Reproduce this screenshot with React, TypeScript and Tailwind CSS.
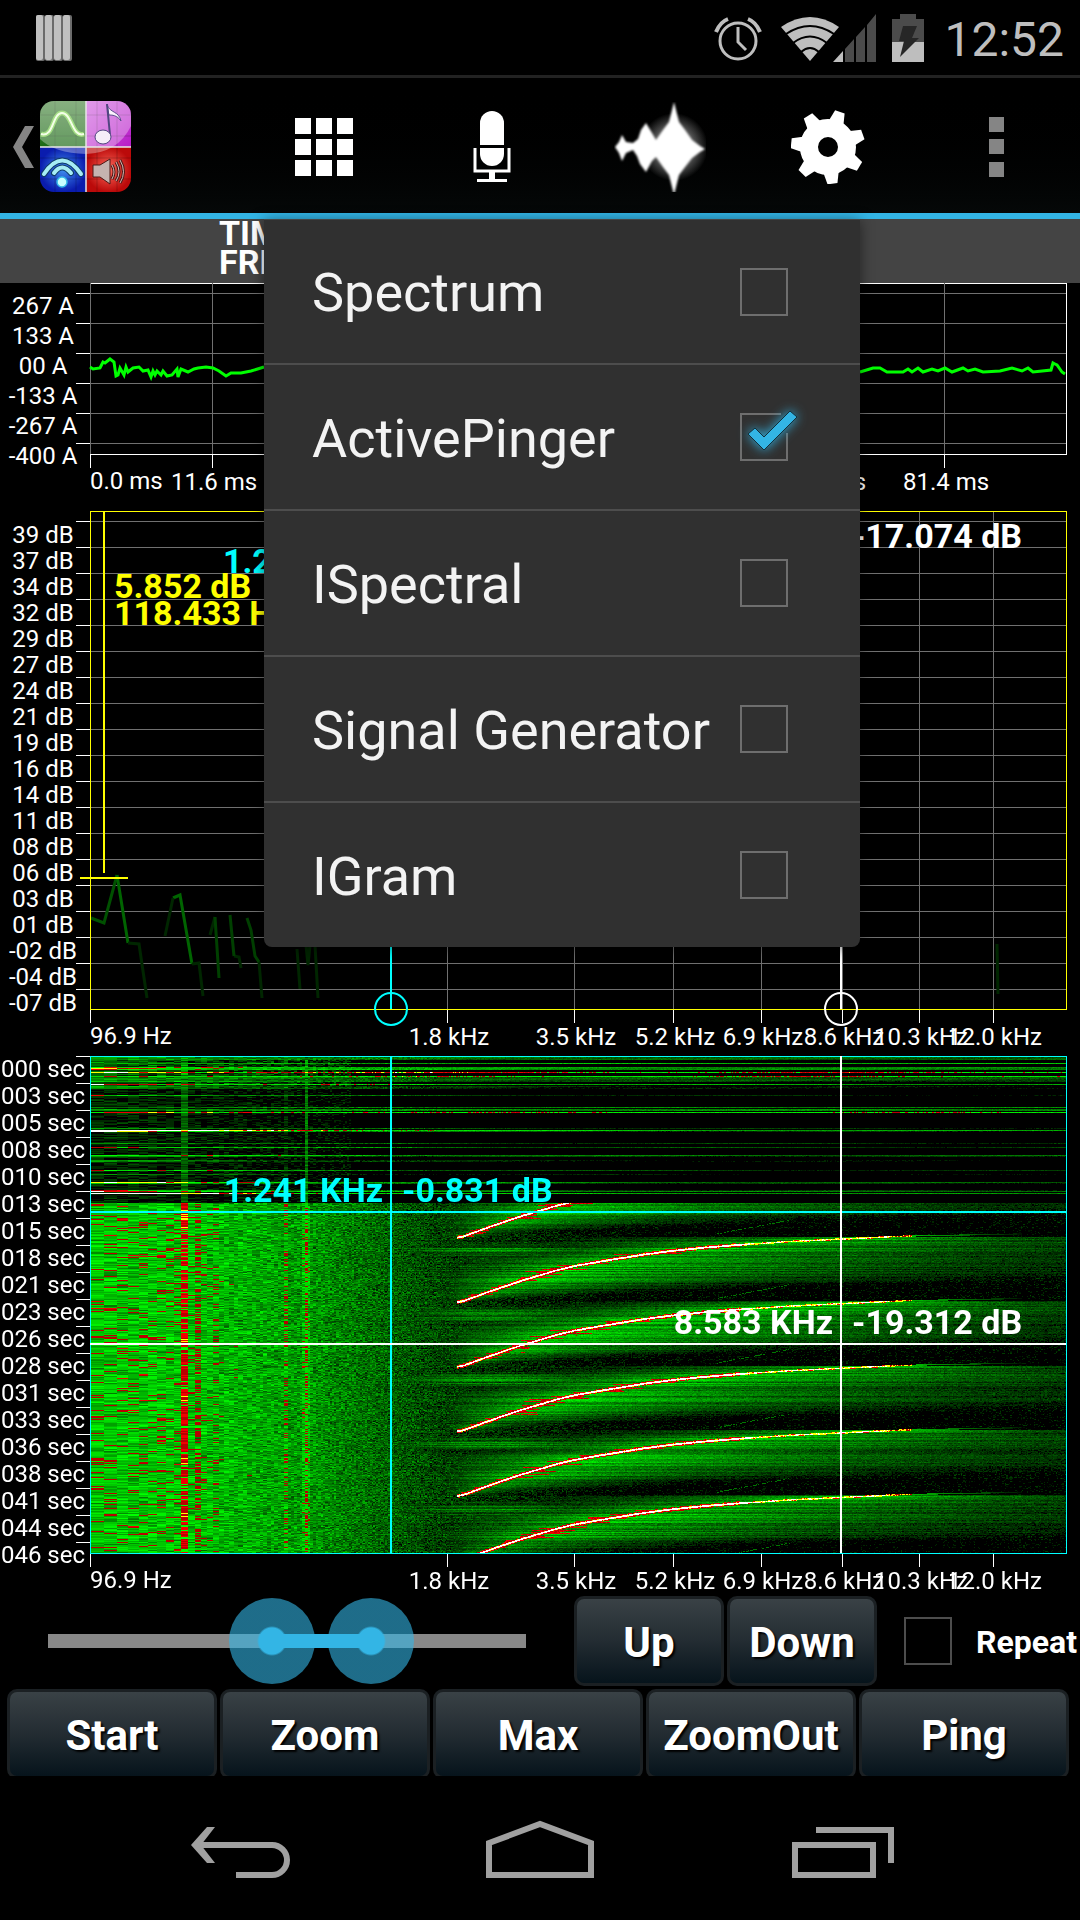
import { useEffect, useRef, useState } from "react";
import type { ReactNode } from "react";

const PLOT_LEFT = 90;
const PLOT_RIGHT = 1067;
const PLOT_WIDTH = PLOT_RIGHT - PLOT_LEFT;

const DB_LABELS = [
  "39", "37", "34", "32", "29", "27", "24", "21", "19", "16",
  "14", "11", "08", "06", "03", "01", "-02", "-04", "-07",
];

const SEC_LABELS = [
  "000", "003", "005", "008", "010", "013", "015", "018", "021", "023",
  "026", "028", "031", "033", "036", "038", "041", "044", "046",
];

const AMP_LABELS = ["267 A", "133 A", "00 A", "-133 A", "-267 A", "-400 A"];

const FREQ_TICKS = [
  { x: 447, label: "1.8 kHz" },
  { x: 574, label: "3.5 kHz" },
  { x: 673, label: "5.2 kHz" },
  { x: 761, label: "6.9 kHz" },
  { x: 842, label: "8.6 kHz" },
  { x: 919, label: "10.3 kHz" },
  { x: 993, label: "12.0 kHz" },
];

const MENU_ITEMS = ["Spectrum", "ActivePinger", "ISpectral", "Signal Generator", "IGram"];

/* ---------- status bar ---------- */

function StatusBar() {
  return (
    <div className="flex h-[75px] items-center justify-between bg-black pl-9 pr-4">
      <svg width="36" height="46" viewBox="0 0 36 46">
        {[0, 9, 18, 27].map((x) => (
          <g key={x}>
            <rect x={x} y="0" width="9" height="46" rx="2" fill="#6b6b6b" />
            <rect x={x} y="0" width="7" height="45" rx="2" fill="#c0c0c0" />
          </g>
        ))}
      </svg>
      <div className="flex items-center">
        <svg width="48" height="48" viewBox="0 0 48 48" fill="none" stroke="#bebebe">
          <circle cx="24" cy="27" r="18" strokeWidth="3" />
          <path d="M24 13v15l8 8" strokeWidth="3" />
          <path d="M2 18Q6 8 14 5M46 18Q42 8 34 5" strokeWidth="4" />
        </svg>
        <svg className="ml-[19px]" width="95" height="48" viewBox="0 0 95 48">
          <g fill="#bebebe">
            <path d="M0 13Q29 -7 58 13L29 47Z" />
          </g>
          <g fill="none" stroke="#000" strokeWidth="2">
            <path d="M5 20Q29 4 53 20" />
            <path d="M12 29Q29 16 46 29" />
            <path d="M20 38Q29 30 38 38" />
          </g>
          <g fill="#4b4b4b">
            <path d="M64 35l9-10v23h-9zM75 23l9-10v35h-9zM86 11l9-11v48h-9z" />
          </g>
          <path d="M52 48l10-11v11z" fill="#bebebe" />
        </svg>
        <svg className="ml-4" width="32" height="48" viewBox="0 0 32 48">
          <path d="M8 0h16v5h8v43H0V5h8z" fill="#4b4b4b" />
          <path d="M0 28h32v20H0z" fill="#bebebe" />
          <path d="M11 12h14l-5 12h7L8 43l4-16H7z" fill="#262626" />
        </svg>
        <span className="ml-5 pt-1 text-[48px] leading-[56px] text-[#bebebe]">12:52</span>
      </div>
    </div>
  );
}

/* ---------- action bar ---------- */

function AppLogo() {
  return (
    <svg width="91" height="91" viewBox="0 0 91 91">
      <defs>
        <clipPath id="logo-clip">
          <rect width="91" height="91" rx="14" />
        </clipPath>
        <linearGradient id="lg-green" x1="0" y1="0" x2="0" y2="1">
          <stop offset="0" stopColor="#4f8a45" />
          <stop offset="1" stopColor="#1b6a14" />
        </linearGradient>
        <linearGradient id="lg-pink" x1="0" y1="0" x2="1" y2="1">
          <stop offset="0" stopColor="#d26be0" />
          <stop offset="1" stopColor="#b81cc8" />
        </linearGradient>
        <radialGradient id="lg-blue">
          <stop offset="0" stopColor="#3f8ff0" />
          <stop offset="1" stopColor="#0a1cae" />
        </radialGradient>
        <radialGradient id="lg-red">
          <stop offset="0" stopColor="#ff6a5c" />
          <stop offset="1" stopColor="#bb0a0a" />
        </radialGradient>
      </defs>
      <g clipPath="url(#logo-clip)">
        <rect width="46" height="46" fill="url(#lg-green)" />
        <rect x="46" width="45" height="46" fill="url(#lg-pink)" />
        <rect y="46" width="46" height="45" fill="url(#lg-blue)" />
        <rect x="46" y="46" width="45" height="45" fill="url(#lg-red)" />
        <g stroke="#00000030" fill="none">
          <path d="M15 0v91M36 0v91M57 0v91M77 0v91M0 14h91M0 35h91M0 57h91M0 78h91" />
        </g>
        <path d="M0 0h91v25Q78 52 46 53Q14 52 0 38z" fill="#fff" opacity=".32" />
        <path d="M46 0v91M0 46h91" stroke="#e6e6e6" strokeWidth="1.5" />
        <path d="M1 33C14 37 12 12 22 12S32 37 44 33" fill="none" stroke="#b8f58f" strokeWidth="5" opacity=".7" />
        <path d="M1 33C14 37 12 12 22 12S32 37 44 33" fill="none" stroke="#f4ffe8" strokeWidth="2" />
        <path d="M67 4c3 8 12 6 14 16-4-6-9-6-12-6z" fill="#fff" fillOpacity=".9" stroke="#5a4d8c" strokeWidth="1" />
        <path d="M67 3l3 31" stroke="#504680" strokeWidth="2" />
        <ellipse cx="63" cy="36" rx="8" ry="7" fill="#f5eef8" stroke="#504680" strokeWidth="1" />
        <g fill="none" strokeLinecap="round">
          <path d="M4 73Q22 46 41 73M14 72Q22 61 31 72" stroke="#0d3a66" strokeWidth="6" />
          <path d="M4 73Q22 46 41 73M14 72Q22 61 31 72" stroke="#a5ecf4" strokeWidth="4" />
        </g>
        <circle cx="22" cy="81" r="5" fill="#c8ffff" stroke="#35b9e8" strokeWidth="1.5" />
        <path d="M53 64h7l10-6v25l-10-7h-7z" fill="#c5b3b0" stroke="#4a1a18" strokeWidth="1" />
        <path d="M72 64q4 7 0 14M76 61q6 10 0 19M80 59q7 12 0 23" fill="none" stroke="#4a1a18" strokeWidth="3" />
        <path d="M72 64q4 7 0 14M76 61q6 10 0 19M80 59q7 12 0 23" fill="none" stroke="#d8b5b2" strokeWidth="1" />
      </g>
    </svg>
  );
}

function GearIcon() {
  const teeth = Array.from({ length: 7 }, (_, i) => (i * 360) / 7 - 7);
  return (
    <svg width="74" height="74" viewBox="-37 -37 74 74" fill="#fff">
      <circle r="19" fill="none" stroke="#fff" strokeWidth="18" />
      {teeth.map((a) => (
        <path key={a} d="M-8 24L-5 37H5L8 24z" transform={`rotate(${a})`} />
      ))}
    </svg>
  );
}

function BarButton({ label, children }: { label: string; children: ReactNode }) {
  return (
    <button type="button" aria-label={label} className="flex h-full w-42 items-center justify-center">
      {children}
    </button>
  );
}

function ActionBar() {
  return (
    <header className="flex h-[144px] items-center border-t-[3px] border-b-[6px] border-t-[#222] border-b-[#33b5e5] bg-linear-to-b from-black to-[#050808] pt-[2px]">
      <button type="button" aria-label="Navigate up" className="flex items-center gap-[6px] pl-[13px]">
        <svg width="21" height="42" viewBox="0 0 21 42">
          <path d="M12 0h9L9 21l12 21h-9L0 21z" fill="#858585" />
        </svg>
        <AppLogo />
      </button>
      <div className="ml-auto flex h-full">
        <BarButton label="Modules">
          <svg width="58" height="58" viewBox="0 0 58 58" fill="#fff">
            {[0, 21, 42].map((y) => [0, 21, 42].map((x) => <rect key={`${x}-${y}`} x={x} y={y} width="16" height="16" />))}
          </svg>
        </BarButton>
        <BarButton label="Microphone">
          <svg width="38" height="72" viewBox="0 0 38 72" fill="#fff">
            <path d="M7 12a12 12 0 0 1 24 0v22H7z" />
            <path d="M7 37h24v6a12 12 0 0 1-24 0z" />
            <path d="M2 37v23h34V37" fill="none" stroke="#fff" strokeWidth="3" />
            <path d="M16 60h6v8h-6z" />
            <path d="M4 68h30v3H4z" />
          </svg>
        </BarButton>
        <BarButton label="Signal">
          <svg width="92" height="90" viewBox="0 0 92 90">
            <defs>
              <radialGradient id="wave-glow">
                <stop offset="0" stopColor="#fff" stopOpacity=".8" />
                <stop offset="1" stopColor="#fff" stopOpacity="0" />
              </radialGradient>
              <filter id="wave-soft">
                <feGaussianBlur stdDeviation="1.3" />
              </filter>
            </defs>
            <circle cx="60" cy="45" r="34" fill="url(#wave-glow)" />
            <path
              d="M1 45l4-5 3-7 4 7 7 1 5-4 3-9 5-7 6 10 4 7 7-10 6-8 5-20 5 20 6 8 7 10 8 6 5 3-5 3-8 6-7 9-6 8-5 20-5-20-6-8-7-10-4 4-6 11-6-8-3-8-4-6-7 3-4 8-3-8z"
              fill="#fff"
              filter="url(#wave-soft)"
            />
          </svg>
        </BarButton>
        <BarButton label="Settings">
          <GearIcon />
        </BarButton>
        <BarButton label="More options">
          <svg width="15" height="60" viewBox="0 0 15 60" fill="#858585">
            <path d="M0 0h15v15H0zM0 22h15v15H0zM0 45h15v15H0z" />
          </svg>
        </BarButton>
      </div>
    </header>
  );
}

/* ---------- drop-down ---------- */

function MenuItem({ label, checked, onChange }: { label: string; checked: boolean; onChange: () => void }) {
  return (
    <label className="flex h-[146px] items-center justify-between border-b-2 border-[#4d4d4d] pl-12 pr-[72px] text-[54px] whitespace-nowrap text-[#f3f3f3] first:h-[145px] last:h-36 last:border-b-0">
      <span className="pt-[2px]">{label}</span>
      <span className="grid size-12 shrink-0">
        <input
          type="checkbox"
          checked={checked}
          onChange={onChange}
          className="size-12 appearance-none border-2 border-[#6e6e6e] checked:border-transparent [grid-area:1/1]"
        />
        {checked && (
          <svg className="pointer-events-none overflow-visible [grid-area:1/1]" width="48" height="48" viewBox="0 0 48 48">
            <path d="M41 1H1v46h46V20" fill="none" stroke="#6e6e6e" strokeWidth="2" />
            <path
              className="drop-shadow-[0_0_6px_#33b5e5]"
              d="M8 21l7-6 9 9L50-2l7 6-33 33z"
              fill="#33b5e5"
              stroke="#12303c"
              strokeWidth="1"
            />
          </svg>
        )}
      </span>
    </label>
  );
}

function ModuleMenu() {
  const [active, setActive] = useState("ActivePinger");
  return (
    <div className="absolute top-0 right-[220px] w-[596px] rounded-b-lg border-t border-[#454545] bg-[#303030] shadow-[0_2px_14px_rgba(0,0,0,0.5)]">
      {MENU_ITEMS.map((item) => (
        <MenuItem key={item} label={item} checked={item === active} onChange={() => setActive(item)} />
      ))}
    </div>
  );
}

/* ---------- charts ---------- */

const WAVE_LEFT =
  "90,84 93,86 100,85 103,79 105,80 110,76 114,79 116,93 118,92 120,85 124,92 126,84 128,89 133,85 139,84 143,88 148,87 151,94 153,88 155,92 157,88 161,92 163,88 167,93 172,92 177,86 178,94 181,86 188,89 194,86 198,85 206,84 213,85 219,88 226,93 231,90 241,90 251,88 264,84";
const WAVE_RIGHT =
  "860,89 873,85 880,85 887,89 903,89 908,86 912,89 918,85 923,89 932,86 938,88 945,85 952,89 963,85 968,88 975,86 983,89 1000,88 1012,85 1022,88 1028,85 1033,89 1051,87 1053,80 1055,81 1057,82 1062,89 1065,91";

function TimeChart() {
  const xs = [0, 1, 2, 3, 4, 5, 6, 7].map((i) => PLOT_LEFT + i * 122);
  return (
    <svg className="block w-full" viewBox="0 0 1080 217" fontSize="24" fill="#fff">
      {AMP_LABELS.map((label, i) => (
        <g key={label}>
          <path d={`M90 ${10 + i * 30}.5H1066`} stroke="#707070" />
          <path d={`M76 ${10 + i * 30}.5H90`} stroke="#fff" />
          <text x="43" y={31 + i * 30} textAnchor="middle">{label}</text>
        </g>
      ))}
      <rect x="90.5" y="0.5" width="976" height="171" fill="none" stroke="#fff" />
      {xs.map((x) => (
        <g key={x}>
          <path d={`M${x}.5 0V171`} stroke="#707070" />
          <path d={`M${x}.5 171V185`} stroke="#fff" />
        </g>
      ))}
      <polyline points={WAVE_LEFT} fill="none" stroke="#0f0" strokeWidth="3" />
      <polyline points={WAVE_RIGHT} fill="none" stroke="#0f0" strokeWidth="3" />
      <text x="90" y="206">0.0 ms</text>
      <text x="214" y="207" textAnchor="middle">11.6 ms</text>
      <text x="823" y="207" textAnchor="middle">69.8 ms</text>
      <text x="946" y="207" textAnchor="middle">81.4 ms</text>
    </svg>
  );
}

function FreqAxis({ y, gridTop }: { y: number; gridTop?: number }) {
  return (
    <g>
      <path d={`M90.5 ${y}v14`} stroke="#fff" />
      <text x="90" y={y + 35}>96.9 Hz</text>
      {FREQ_TICKS.map(({ x, label }) => (
        <g key={label}>
          {gridTop !== undefined && <path d={`M${x}.5 ${gridTop}V${y}`} stroke="#707070" />}
          <path d={`M${x}.5 ${y}v14`} stroke="#fff" />
          <text x={x + 2} y={y + 36} textAnchor="middle">{label}</text>
        </g>
      ))}
    </g>
  );
}

function SpectrumChart() {
  return (
    <svg className="block w-full" viewBox="0 0 1080 550" fontSize="24" fill="#fff">
      {DB_LABELS.map((label, i) => (
        <g key={label}>
          <path d={`M90 ${21 + i * 26}.5H1066`} stroke="#707070" />
          <path d={`M76 ${21 + i * 26}.5H90`} stroke="#fff" />
          <text x="43" y={43 + i * 26} textAnchor="middle">{label} dB</text>
        </g>
      ))}
      <FreqAxis y={509} gridTop={11} />
      <g fill="none" strokeWidth="3">
        <path d="M91 418l13 5 13-48" stroke="#005000" />
        <path d="M117 375l11 68M173 398l7-3 12 69" stroke="#006400" />
        <path d="M128 443l11 1 8 54M165 436l8-38M192 464l7-1 4 33M210 435l5-18M234 456l5 1 2 11M259 462l3 36M297 449l3 40M306 445l2 20 2-20M315 445l3 53M997 444l1 50" stroke="#002600" />
        <path d="M215 417l4 61M230 415l4 41M247 418l4 12 4 26 4 6" stroke="#004000" />
      </g>
      <rect x="90.5" y="11.5" width="976" height="498" fill="none" stroke="#ff0" />
      <path d="M104 11V373M80 378H128" stroke="#ff0" strokeWidth="2" />
      <g fill="none" stroke="#0ff" strokeWidth="2">
        <path d="M391 11V509" />
        <circle cx="391" cy="509" r="16" />
      </g>
      <g fill="none" stroke="#fff" strokeWidth="2">
        <path d="M841 11V509" />
        <circle cx="841" cy="509" r="16" />
      </g>
      <g fontSize="34" fontWeight="700">
        <text x="114" y="98" fill="#ff0">5.852 dB</text>
        <text x="114" y="125" fill="#ff0">118.433 Hz</text>
        <text x="223" y="73" fill="#0ff">1.241 KHz</text>
        <text x="1022" y="48" textAnchor="end">-17.074 dB</text>
      </g>
    </svg>
  );
}

/* ---------- spectrogram ---------- */

function makeRandom(seed: number) {
  let s = seed;
  return () => {
    s = (s + 0x6d2b79f5) | 0;
    let t = Math.imul(s ^ (s >>> 15), 1 | s);
    t = (t + Math.imul(t ^ (t >>> 7), 61 | t)) ^ t;
    return ((t ^ (t >>> 14)) >>> 0) / 4294967296;
  };
}

// x position -> rows above the start of a ping
const SWEEP = [
  [367, -1], [373, 0], [392, 7], [409, 13], [430, 20], [450, 26], [467, 31], [484, 35], [501, 38], [519, 41],
  [553, 46.5], [584, 50.5], [615, 53.5], [646, 56], [698, 59.5], [751, 62], [815, 65], [976, 68],
];
const PERIOD = 64.6;
const FIRST_PING = 180;

function lerpTable(v: number, from: 0 | 1, to: 0 | 1) {
  for (let i = 1; i < SWEEP.length; i++) {
    if (v <= SWEEP[i][from]) {
      const a = SWEEP[i - 1];
      const b = SWEEP[i];
      return a[to] + ((v - a[from]) / (b[from] - a[from])) * (b[to] - a[to]);
    }
  }
  return SWEEP[SWEEP.length - 1][to];
}

function ramp(v: number, from: number, to: number) {
  return Math.min(1, Math.max(0, (v - from) / (to - from)));
}

// row, peak level at the left edge, level at the right edge, height
const STREAKS = [
  [1, 0.45, 0.25, 3], [7, 0.4, 0.5, 1], [11, 0.76, 0.34, 3], [16, 0.84, 0.69, 1], [20, 0.62, 0.68, 1], [21, 0.4, 0.2, 4],
  [25, 0.68, 0.1, 1], [28, 0.86, 0.42, 1], [30, 0.45, 0.02, 3], [39, 0.68, 0.04, 1], [51, 0.3, 0.36, 1],
  [53, 0.4, 0.36, 2], [56, 0.7, 0.64, 1], [72, 0.5, 0.1, 1], [74, 1.15, 0.42, 1], [75, 0.9, 0.05, 1], [87, 0.45, 0.12, 1],
  [91, 0.76, 0.14, 1], [99, 0.78, 0.26, 1], [100, 0.4, 0.1, 1], [104, 0.4, 0, 2], [114, 0.78, 0.1, 1],
  [118, 0.35, 0, 1], [126, 0.95, 0.22, 1], [127, 0.6, 0.1, 1], [134, 0.7, 0.1, 1], [135, 0.88, 0.3, 1], [137, 1.15, 0.35, 1],
];

function paintSpectrogram(ctx: CanvasRenderingContext2D, w: number, h: number) {
  const rnd = makeRandom(7);
  const img = ctx.createImageData(w, h);
  const bins: number[] = [0];
  for (let n = 0; bins[bins.length - 1] < w; n++) {
    bins.push(bins[bins.length - 1] + Math.max(1.3, 14 / (1 + 0.11 * n)));
  }

  for (let y = 0; y < h; y++) {
    const quiet = y < 147;
    const rowGain = rnd();
    const fringeLeft = rnd() < 0.35 ? 26 * rnd() : 3 * rnd();
    const fringeRight = rnd() < 0.35 ? 26 * rnd() : 3 * rnd();
    const streak = STREAKS.find((s) => y >= s[0] && y < s[0] + s[3]);
    let phase = (FIRST_PING - y) % PERIOD;
    if (phase < 0) phase += PERIOD;
    const p = phase / PERIOD;
    const cx = lerpTable(phase, 1, 0);

    for (let b = 0; b < bins.length - 1; b++) {
      const x0 = Math.round(bins[b]);
      const x1 = Math.round(bins[b + 1]);
      const noise = rnd() + rnd() - 1;
      let v: number;

      if (quiet) {
        v = x0 < 260 ? 0.1 - x0 * 0.0003 + noise * 0.16 : -0.1;
        if (y < 32) v += 0.18 * Math.exp(-x0 / 300) + noise * 0.1;
        if (x0 >= 88 && x0 < 95) v += 0.2;
        if (x0 >= 192 && x0 < 198) v += 0.08;
        if (x0 >= 215 && x0 < 217) v += 0.28;
        if (streak) {
          const fade = Math.exp(-x0 / 260);
          const drift = 0.05 * Math.sin(x0 / 62 + y * 1.7);
          v = Math.max(v, streak[1] * fade + streak[2] * (1 - fade) + drift + noise * (x0 < 350 ? 0.16 : 0.08));
        }
      } else {
        v = 0.54 - 0.16 * ramp(x0, 80, 240) - 0.18 * ramp(x0, 230, 360) - 0.16 * ramp(x0, 360, 520) + noise * 0.24;
        if (x0 < 120 && rnd() < 0.045) v = 0.73;
        if (x0 >= 88 && x0 < 95) v = 0.74 + noise * 0.1;
        if (x0 >= 101 && x0 < 107 && rnd() < 0.35) v = 0.75;
        if (x0 >= 120 && x0 < 128 && rnd() < 0.12) v = 0.74;
        if (x0 >= 192 && x0 < 198) v = rnd() < 0.25 ? 0.74 : v + 0.1;
        if (x0 >= 212 && x0 < 220) v += 0.12;
        if (x0 >= 215 && x0 < 217) v = rnd() < 0.4 ? 0.74 : 0.6;

        const inRange = ramp(x0, 230, 380);
        if (inRange > 0) {
          const d = x0 - cx;
          const leftReach = 35 + p * 130;
          const rightReach = 30 + 300 * ramp(p, 0.05, 0.45) * (1 - 0.6 * ramp(p, 0.85, 1));
          const strength = 0.4 + 0.24 * ramp(p, 0.05, 0.35);
          const glow = strength * Math.exp(d < 0 ? d / leftReach : -d / rightReach);
          const lined = glow * (0.55 + rowGain * 0.5);
          v *= 1 - inRange * (0.4 - rowGain * 0.4);
          v = Math.max(v, inRange * lined + noise * 0.1);
          const warm = 0.34 * Math.exp(-Math.pow((p - 0.78) / 0.12, 2)) * (1 - ramp(x0, 420, 620));
          v = Math.max(v, inRange * warm * (0.5 + rowGain) + noise * 0.1);
          v -= 0.06 * ramp(x0, 440, 640) * (1 - ramp(p, 0.2, 0.45));
        }
      }

      for (let x = x0; x < x1 && x < w; x++) {
        let level = v;
        if (!quiet && x >= 367) {
          const rise = lerpTable(x, 0, 1);
          let dy = (((FIRST_PING - y - rise) % PERIOD) + PERIOD) % PERIOD;
          if (dy > PERIOD / 2) dy -= PERIOD;
          const d = x - cx;
          if (x < 800) {
            const thick = x < 660 ? 0.8 : 0.6;
            const long = x > 430 && x < 600 ? 1 : 0.3;
            const inFringe = d > -4 - fringeLeft * long && d < 4 + fringeRight * long;
            if (Math.abs(dy) < thick) level = x < 660 || noise > 0 ? 1 : 0.84;
            else if (Math.abs(dy) < thick + 0.3) level = noise > 0 ? 0.84 : 0.76;
            else if (x < 650 && (inFringe || (Math.abs(dy) < 2 && noise > -0.3))) level = 0.75 + noise * 0.04;
          } else if (x < 822) {
            if (Math.abs(dy) < 0.7) level = noise > 0 ? 0.84 : 0.75;
          } else if (Math.abs(dy) < 0.6) {
            level = Math.max(level, 0.5 - (x - 822) * 0.004);
          }
          // weak second harmonic
          if (x > 626 && x < 700) {
            const hy = (((FIRST_PING - y - ((x - 626) * 14) / 74 - 2) % PERIOD) + PERIOD) % PERIOD;
            if (hy < 1 && noise > -0.1) level = Math.max(level, 0.3);
          }
        }

        const i = (y * w + x) * 4;
        img.data[i + 3] = 255;
        if (level >= 0.9) {
          img.data[i] = img.data[i + 1] = img.data[i + 2] = 255;
        } else if (level >= 0.81) {
          img.data[i] = img.data[i + 1] = 255;
        } else if (level >= 0.7) {
          img.data[i] = level > 0.75 ? 240 : 185;
        } else if (level > 0.06) {
          img.data[i + 1] = Math.min(255, Math.round((level * 370) / 20) * 20);
        }
      }
    }
  }
  ctx.putImageData(img, 0, 0);
}

function Spectrogram() {
  const canvasRef = useRef<HTMLCanvasElement>(null);

  useEffect(() => {
    const canvas = canvasRef.current;
    const ctx = canvas?.getContext("2d");
    if (canvas && ctx) paintSpectrogram(ctx, canvas.width, canvas.height);
  }, []);

  return (
    <svg className="block w-full" viewBox="0 0 1080 546" fontSize="24" fill="#fff">
      <foreignObject x={PLOT_LEFT} y="6" width={PLOT_WIDTH} height="497">
        <canvas ref={canvasRef} width={PLOT_WIDTH} height={497} className="block" />
      </foreignObject>
      {SEC_LABELS.map((label, i) => (
        <g key={label}>
          <path d={`M76 ${6 + i * 27}.5H90`} stroke="#fff" />
          <text x="43" y={27 + i * 27} textAnchor="middle">{label} sec</text>
        </g>
      ))}
      <FreqAxis y={503} />
      <rect x="90.5" y="6.5" width="976" height="497" fill="none" stroke="#0ff" />
      <path d="M391 6V503M90 162H1066" stroke="#0ff" strokeWidth="2" />
      <path d="M90 294H1066M841 6V503" stroke="#fff" strokeWidth="2" />
      <g fontSize="34" fontWeight="700">
        <text x="383" y="152" fill="#0ff" textAnchor="end">1.241 KHz</text>
        <text x="402" y="152" fill="#0ff">-0.831 dB</text>
        <text x="833" y="284" textAnchor="end">8.583 KHz</text>
        <text x="852" y="284">-19.312 dB</text>
      </g>
    </svg>
  );
}

/* ---------- controls ---------- */

const RANGE_MAX = 478;

function RangeThumb({ label, value, onChange }: { label: string; value: number; onChange: (v: number) => void }) {
  return (
    <input
      type="range"
      aria-label={label}
      max={RANGE_MAX}
      value={value}
      onChange={(e) => onChange(Number(e.target.value))}
      className="pointer-events-none h-[86px] w-full appearance-none bg-transparent [grid-area:1/1] [&::-webkit-slider-thumb]:pointer-events-auto [&::-webkit-slider-thumb]:size-[86px] [&::-webkit-slider-thumb]:appearance-none [&::-webkit-slider-thumb]:rounded-full [&::-webkit-slider-thumb]:bg-[radial-gradient(circle,#33b5e5_13px,rgba(51,181,229,0.6)_15px)]"
    />
  );
}

function RangeSlider() {
  const [low, setLow] = useState(224);
  const [high, setHigh] = useState(323);
  const fill = {
    marginLeft: `${(low / RANGE_MAX) * 100}%`,
    width: `${((high - low) / RANGE_MAX) * 100}%`,
  };
  return (
    <div className="grid min-w-0 flex-1 items-center px-[5px]">
      <div className="mx-[43px] h-[14px] bg-[#888] [grid-area:1/1]">
        <div className="h-full bg-[#33b5e5]" style={fill} />
      </div>
      <RangeThumb label="Range start" value={low} onChange={(v) => setLow(Math.min(v, high))} />
      <RangeThumb label="Range end" value={high} onChange={(v) => setHigh(Math.max(v, low))} />
    </div>
  );
}

function PanelButton({ children, className = "" }: { children: ReactNode; className?: string }) {
  return (
    <button
      type="button"
      className={`h-[90px] rounded-[10px] border-[3px] border-[#1b2023] bg-linear-to-b from-[#3b4347] via-[#232c32] to-[#05121a] bg-origin-border pt-[2px] text-[42px] font-bold text-white [text-shadow:2px_2px_2px_#000] ${className}`}
    >
      {children}
    </button>
  );
}

function Controls() {
  return (
    <div>
      <div className="flex h-[90px] items-center">
        <RangeSlider />
        <div className="flex shrink-0 gap-[3px]">
          <PanelButton className="w-[150px]">Up</PanelButton>
          <PanelButton className="w-[150px]">Down</PanelButton>
        </div>
        <label className="ml-[27px] flex w-44 shrink-0 items-center gap-6 overflow-hidden text-[32px] font-bold whitespace-nowrap">
          <input type="checkbox" className="size-12 shrink-0 appearance-none border-2 border-[#4d4d4d] checked:bg-[#33b5e5]" />
          <span className="pt-[2px]">Repeat</span>
        </label>
      </div>
      <div className="mt-[3px] grid h-[87px] grid-cols-5 gap-[3px] overflow-hidden pr-[11px] pl-[7px]">
        <PanelButton>Start</PanelButton>
        <PanelButton>Zoom</PanelButton>
        <PanelButton>Max</PanelButton>
        <PanelButton>ZoomOut</PanelButton>
        <PanelButton>Ping</PanelButton>
      </div>
    </div>
  );
}

function NavBar() {
  return (
    <nav className="flex h-36 items-center justify-center gap-[190px] bg-black pt-[2px]">
      <button type="button" aria-label="Back" className="flex w-28 justify-center">
        <svg width="108" height="58" viewBox="0 0 108 58" fill="none" stroke="#a0a0a0" strokeWidth="6">
          <path d="M12 25h76a15 15 0 0 1 0 30H52" />
          <path d="M23 7h8L17 25l14 18h-8L7 25z" fill="#a0a0a0" stroke="none" />
        </svg>
      </button>
      <button type="button" aria-label="Home" className="flex w-28 justify-center">
        <svg width="108" height="58" viewBox="0 0 108 58" fill="none" stroke="#a0a0a0" strokeWidth="6">
          <path d="M3 55V23L54 4l51 19v32z" />
        </svg>
      </button>
      <button type="button" aria-label="Recent apps" className="flex w-28 justify-center">
        <svg width="108" height="58" viewBox="0 0 108 58" fill="none" stroke="#a0a0a0" strokeWidth="6">
          <path d="M7 25h78v30H7z" />
          <path d="M28 10h75v33" />
        </svg>
      </button>
    </nav>
  );
}

export default function App() {
  return (
    <div className="min-h-screen overflow-hidden bg-black font-[Roboto,sans-serif] text-white">
      <StatusBar />
      <ActionBar />
      <main className="relative">
        <div className="h-16 bg-[#444] pl-[219px] text-[34px] leading-[29px] font-bold">
          <p>TIME</p>
          <p>FREQ</p>
        </div>
        <TimeChart />
        <SpectrumChart />
        <Spectrogram />
        <ModuleMenu />
      </main>
      <Controls />
      <NavBar />
    </div>
  );
}
